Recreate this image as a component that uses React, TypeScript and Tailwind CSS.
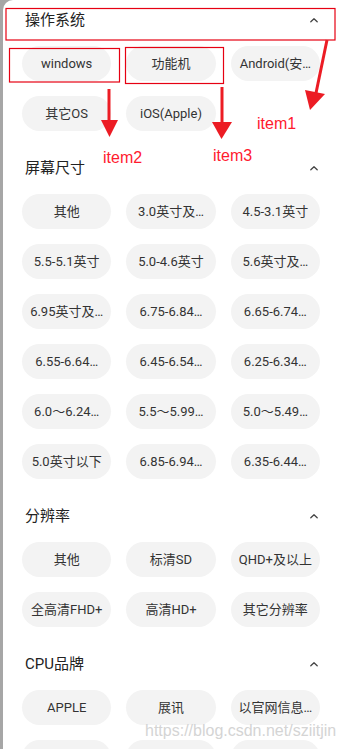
import React from "react";

type Section = { title: string; items: string[] };

const sections: Section[] = [
  { title: "操作系统", items: ["windows", "功能机", "Android(安…", "其它OS", "iOS(Apple)"] },
  {
    title: "屏幕尺寸",
    items: [
      "其他", "3.0英寸及…", "4.5-3.1英寸",
      "5.5-5.1英寸", "5.0-4.6英寸", "5.6英寸及…",
      "6.95英寸及…", "6.75-6.84…", "6.65-6.74…",
      "6.55-6.64…", "6.45-6.54…", "6.25-6.34…",
      "6.0～6.24…", "5.5～5.99…", "5.0～5.49…",
      "5.0英寸以下", "6.85-6.94…", "6.35-6.44…",
    ],
  },
  { title: "分辨率", items: ["其他", "标清SD", "QHD+及以上", "全高清FHD+", "高清HD+", "其它分辨率"] },
  { title: "CPU品牌", items: ["APPLE", "展讯", "以官网信息…", "", "", ""] },
];

const font = { fontFamily: '"Roboto", "Noto Sans CJK SC", sans-serif' };

function Chevron() {
  return (
    <svg width="10" height="6" viewBox="0 0 10 6" className="block">
      <path d="M1.8 4.8 L5 1.8 L8.2 4.8" fill="none" stroke="#444" strokeWidth="1.3" strokeLinecap="round" strokeLinejoin="round" />
    </svg>
  );
}

function SectionBlock({ s }: { s: Section }) {
  return (
    <div className="pb-[21px]">
      <div className="h-8 flex items-center justify-between pl-[3px] pr-[1px]">
        <span className="text-[15px] text-[#222] leading-none">{s.title}</span>
        <Chevron />
      </div>
      <div className="mt-[10px] grid grid-cols-3 gap-x-[15px] gap-y-[15px]">
        {s.items.map((it, i) => (
          <div
            key={i}
            className="h-[35px] rounded-full bg-[#f3f3f3] flex items-center justify-center px-[4px] overflow-hidden whitespace-nowrap text-[13px] text-[#333]"
          >
            {it}
          </div>
        ))}
      </div>
    </div>
  );
}

export default function App() {
  return (
    <div className="relative w-[342px] h-[749px] overflow-hidden bg-[#a6a6a6]" style={font}>
      <div className="ml-[3px] h-full bg-white rounded-tl-[10px] pt-[4px] pl-[19px] pr-[22px]">
        {sections.map((s, i) => (
          <SectionBlock key={i} s={s} />
        ))}
      </div>

      {/* annotations */}
      <svg className="absolute left-0 top-0 pointer-events-none" width="342" height="749" viewBox="0 0 342 749">
        <g fill="none" stroke="#e60012" strokeWidth="1.2">
          <rect x="6" y="8.5" width="329" height="31.5" />
          <rect x="9.5" y="48.5" width="110" height="33.5" />
          <rect x="125.5" y="47.5" width="98" height="36" />
        </g>
        <g stroke="#ec1c24" strokeWidth="3" fill="#ec1c24">
          <line x1="109" y1="89" x2="109" y2="121" />
          <line x1="222" y1="87" x2="222" y2="123" />
          <line x1="327" y1="40" x2="316" y2="93" />
        </g>
        <g fill="#ec1c24">
          <polygon points="101,120 118,120 109.5,137" />
          <polygon points="212,122 232,122 221.5,139" />
          <polygon points="305,90 325,94 310,110" />
        </g>
      </svg>
      <span
        className="absolute left-[257px] top-[116px] text-[16px] leading-none text-[#ff1a2e]"
        style={{ fontFamily: '"Liberation Sans", sans-serif' }}
      >
        item1
      </span>
      <span
        className="absolute left-[103px] top-[150px] text-[16px] leading-none text-[#ff1a2e]"
        style={{ fontFamily: '"Liberation Sans", sans-serif' }}
      >
        item2
      </span>
      <span
        className="absolute left-[213px] top-[148px] text-[16px] leading-none text-[#ff1a2e]"
        style={{ fontFamily: '"Liberation Sans", sans-serif' }}
      >
        item3
      </span>
      <span
        className="absolute left-[145px] top-[723px] text-[16px] leading-none text-[#d4d4d4]"
        style={{ fontFamily: '"Liberation Sans", sans-serif' }}
      >
        https://blog.csdn.net/sziitjin
      </span>
    </div>
  );
}
